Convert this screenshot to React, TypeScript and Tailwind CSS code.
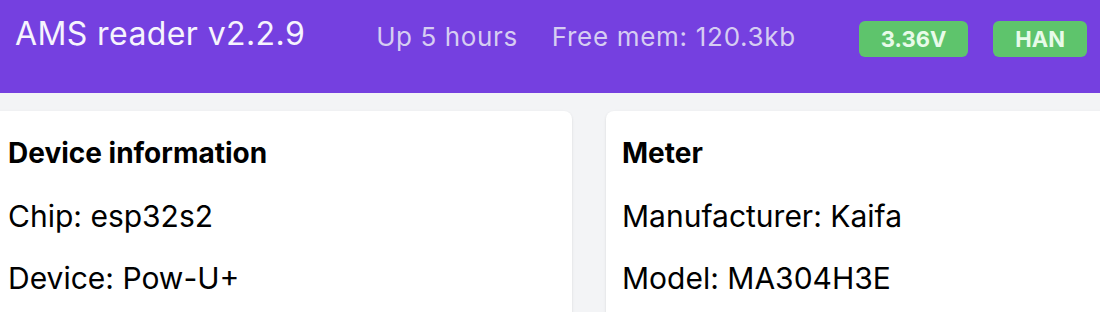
const device = [
  ["Chip", "esp32s2"],
  ["Device", "Pow-U+"],
];

const meter = [
  ["Manufacturer", "Kaifa"],
  ["Model", "MA304H3E"],
];

function Badge({ label }: { label: string }) {
  return (
    <span className="flex h-[36px] items-center justify-center rounded-[6px] bg-[#5ec46c] px-[22px] text-[22px] font-bold text-[#e8fbe9]">
      {label}
    </span>
  );
}

function Card({ title, rows, className }: { title: string; rows: string[][]; className?: string }) {
  return (
    <div className={"rounded-lg bg-white shadow-sm " + (className ?? "")}>
      <h2 className="text-[28px] font-bold leading-none text-black">{title}</h2>
      {rows.map(([k, v], i) => (
        <p key={k} className={(i === 0 ? "mt-[34px]" : "mt-[32px]") + " text-[30px] leading-none text-black"}>
          {k}: {v}
        </p>
      ))}
    </div>
  );
}

export default function App() {
  return (
    <div className="h-[312px] w-[1100px] overflow-hidden bg-gray-100 font-['Inter',sans-serif]">
      <header className="flex h-[93px] items-start bg-[#7540e0] pl-[15px] pt-[14px]">
        <span className="text-[32px] leading-[40px] tracking-[0.4px] text-[#f6f4fd]">AMS reader v2.2.9</span>
        <span className="ml-[71px] mt-[6px] text-[26px] leading-[34px] tracking-[0.6px] text-[#d6cdf2]">Up 5 hours</span>
        <span className="ml-[34px] mt-[6px] text-[26px] leading-[34px] tracking-[0.7px] text-[#d6cdf2]">Free mem: 120.3kb</span>
        <div className="ml-auto mr-[13px] mt-[7px] flex gap-[25px]">
          <Badge label="3.36V" />
          <Badge label="HAN" />
        </div>
      </header>
      <main className="flex gap-[34px] pt-[18px]">
        <Card title="Device information" rows={device} className="-ml-[16px] w-[588px] shrink-0 px-[24px] pt-[28px] pb-10" />
        <Card title="Meter" rows={meter} className="w-[560px] shrink-0 px-[16px] pt-[28px] pb-10" />
      </main>
    </div>
  );
}
